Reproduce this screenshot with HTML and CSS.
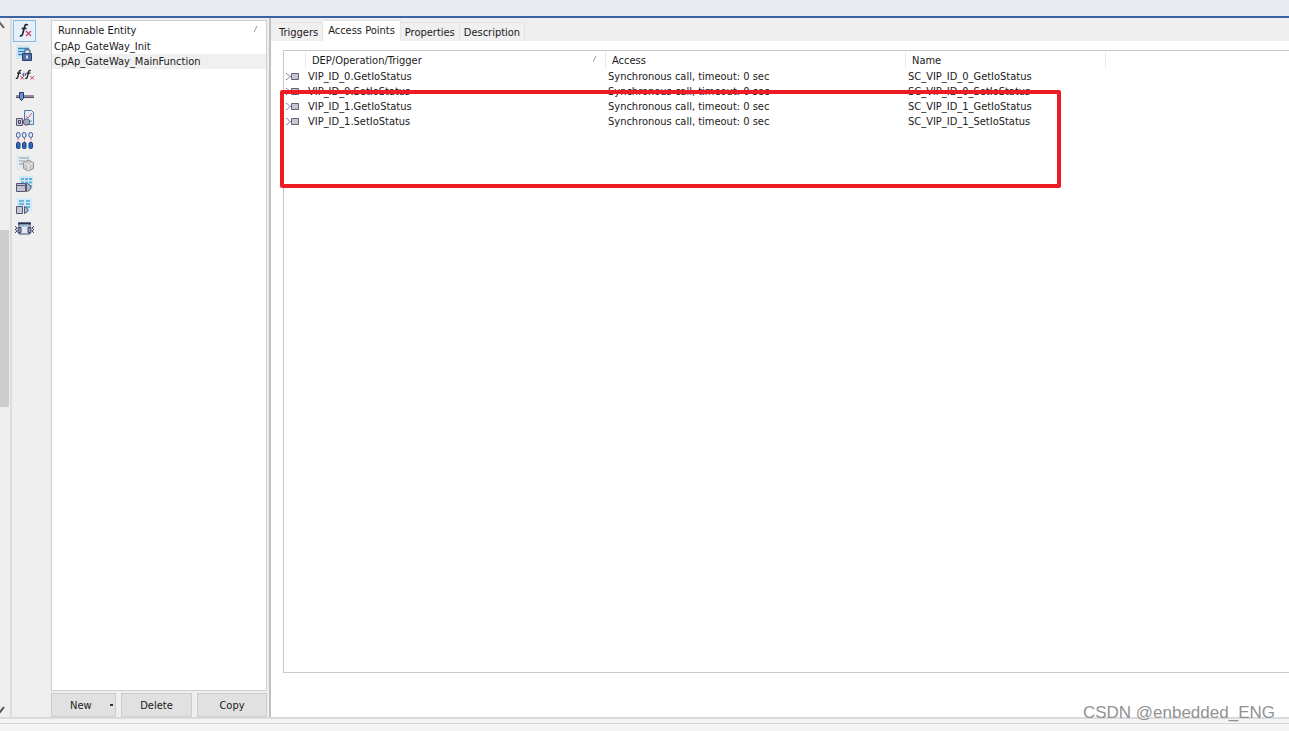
FILE: index.html
```html
<!DOCTYPE html>
<html lang="en">
<head>
<meta charset="utf-8">
<title>Runnable Entities</title>
<link rel="stylesheet" href="styles.css">
</head>
<body>
<div class="app">
  <header class="topbar"></header>
  <main class="workspace">
    <div class="scrollbar">
      <svg class="arrow" viewBox="0 0 9 10"><path d="M-3 6 L0 3 L4 8" fill="none" stroke="#606060" stroke-width="2"/></svg>
      <div class="track"><div class="thumb"></div></div>
      <svg class="arrow" viewBox="0 0 9 10"><path d="M-3 4 L0 7 L4 2" fill="none" stroke="#505050" stroke-width="2"/></svg>
    </div>
    <nav class="toolbar" aria-label="Views">
      <button class="tool active" aria-label="Runnable entities"><svg viewBox="0 0 22 22"><path d="M14.800 5.200Q12.600 3.200 11.600 6.500L9.800 13.500Q9 16.800 6.800 15.600M8.600 8.500h5" fill="none" stroke="#222" stroke-width="1.600"/><path d="M13 11l5 5M18 11l-5 5" stroke="#d04468" stroke-width="1.300"/></svg></button>
      <button class="tool" aria-label="Locked data"><svg viewBox="0 0 22 22"><path d="M3 3h14v14H3z" fill="#d3e7f5"/><path d="M5 6.500h11M5 9.500h6M5 12.500h4" stroke="#328ac4" stroke-width="1.500"/><path d="M11.500 12V10q0-2.500 2.800-2.500T17 10v2" fill="none" stroke="#66728c" stroke-width="1.500"/><path d="M9.500 11.500h9v7h-9z" fill="#4f6fa5" stroke="#2b3f6c"/><path d="M14 13.500v3" stroke="#fff" stroke-width="1.600"/></svg></button>
      <button class="tool" aria-label="Function mapping"><svg viewBox="0 0 22 22"><path d="M8.300 6.800Q6.500 5.800 6 8L5 12.500Q4.400 15 2.800 14.200M4 9.200h4M17.800 6.800Q16 5.800 15.500 8l-1 4.500Q13.900 15 12.300 14.200M13.500 9.200h4" fill="none" stroke="#222" stroke-width="1.300"/><path d="M7.500 12l3.500 3.500M11 12l-3.500 3.500M17.500 12l3.500 3.500M21 12l-3.500 3.500" stroke="#d03d62"/><path d="M9 10.500l1.800-2v4zM13.500 10.500l-1.800-2v4z" fill="#4a4a88"/></svg></button>
      <button class="tool" aria-label="Parameter"><svg viewBox="0 0 22 22"><path d="M3 9h18v3H3z" fill="#8b8d99"/><path d="M3 11.500h18" stroke="#50515c"/><path d="M6.500 6.500h4v6l-2 2-2-2z" fill="#6c92c9" stroke="#25366f"/></svg></button>
      <button class="tool" aria-label="Port report"><svg viewBox="0 0 22 22"><path d="M11.500 2.500h7l2 2v12h-9z" fill="#e2edfa" stroke="#5a76a8"/><path d="M13 8l2 2 4-5" fill="none" stroke="#d66078"/><path d="M15 13h4" stroke="#3f92cb"/><path d="M3.500 10.500h6v7h-6z" fill="#c9cad3" stroke="#565872"/><path d="M5.500 12.500h2v3h-2zM9 14h2" fill="none" stroke="#464968"/><circle cx="13.500" cy="14" r="3.200" fill="#a7a8bb" stroke="#56597a"/></svg></button>
      <button class="tool" aria-label="Connections"><svg viewBox="0 0 22 22"><path d="M5 8v5M11.500 8v5M18 8v5" stroke="#d45d77" stroke-dasharray="2 1"/><g stroke="#3558a0"><rect x="3.500" y="2.500" width="3.500" height="5" rx="1.700" fill="#e4effa"/><rect x="9.500" y="2.500" width="3.500" height="5" rx="1.700" fill="#e4effa"/><rect x="16" y="2.500" width="3.500" height="5" rx="1.700" fill="#e4effa"/></g><g fill="#2a6cb8" stroke="#1c3f88"><rect x="3.500" y="12.500" width="3.500" height="6" rx="1.200"/><rect x="9.500" y="12.500" width="3.500" height="6" rx="1.200"/><rect x="16" y="12.500" width="3.500" height="6" rx="1.200"/></g></svg></button>
      <button class="tool" aria-label="Component data"><svg viewBox="0 0 22 22"><path d="M3 3h15v15H3z" fill="#e0ebf2"/><path d="M6 6h10M6 9h6M6 12h4" stroke="#b0b4b7" stroke-width="1.500"/><path d="M10.500 10.500l5-2.500 5 2.500v6l-5 2.500-5-2.500z" fill="#cbcbcb" stroke="#939393"/><path d="M11 11l4.500 2 4.500-2M15.500 13v5.500" fill="none" stroke="#f0f0f0"/></svg></button>
      <button class="tool" aria-label="Table ports"><svg viewBox="0 0 22 22"><path d="M6 2h14v14H6z" fill="#cfe8f6"/><path d="M8 5h11M8 8.500h11M8 12h11" stroke="#5fb2dc" stroke-width="2" stroke-dasharray="3 1"/><path d="M3.500 9.500h9v8h-9z" fill="#c2c3cc" stroke="#55577a"/><path d="M4 11.500h8" stroke="#55577a"/><path d="M13.500 9.500h1q3.500 2 3.500 4t-3.500 4h-1z" fill="#b5b7c6" stroke="#55577a"/></svg></button>
      <button class="tool" aria-label="Document ports"><svg viewBox="0 0 22 22"><path d="M4 2h15v14H4z" fill="#d3ebf9"/><path d="M6 5h5M13 5h4M6 8h5M13 8h4M13 11h4" stroke="#4ba4d3" stroke-width="1.500"/><path d="M3.500 10.500h6v7h-6z" fill="#c6c7cf" stroke="#55577a"/><path d="M11.500 10.500q3.500 1.500 3.500 3.500t-3.500 3.500z" fill="#b9bbc9" stroke="#55577a"/></svg></button>
      <button class="tool" aria-label="Component ports"><svg viewBox="0 0 22 22"><path d="M6 5h11v11H6z" fill="#dfeaf3" stroke="#42476c"/><path d="M5 5.500h13" stroke="#293354" stroke-width="2"/><path d="M7 8h9" stroke="#6199bd"/><path d="M2 8l2 2-2 1.500 2 1.500-2 2M21 8l-2 2 2 1.500-2 1.500 2 2" fill="none" stroke="#42476c"/><path d="M5 9.500h3v5H5zM15 9.500h3v5h-3z" fill="#8b91a8" stroke="#42476c"/></svg></button>
    </nav>
    <section class="entities">
      <div class="entity-list" role="listbox" aria-label="Runnable Entity">
        <div class="entity-head"><span>Runnable Entity</span><svg class="sort" viewBox="0 0 4 6"><path d="M0 6L3 0" stroke="#999"/></svg></div>
        <div class="entity" role="option">CpAp_GateWay_Init</div>
        <div class="entity selected" role="option" aria-selected="true">CpAp_GateWay_MainFunction</div>
      </div>
      <div class="actions">
        <button class="action new">New<span class="more"></span></button>
        <button class="action">Delete</button>
        <button class="action">Copy</button>
      </div>
    </section>
    <section class="details">
      <div class="tabs" role="tablist">
        <button class="tab" role="tab">Triggers</button>
        <button class="tab current" role="tab" aria-selected="true">Access Points</button>
        <button class="tab" role="tab">Properties</button>
        <button class="tab" role="tab">Description</button>
      </div>
      <div class="points">
        <table class="grid">
          <colgroup><col class="c-icon"><col class="c-wide"><col class="c-wide"><col class="c-name"><col></colgroup>
          <thead><tr><th></th><th><span class="sorted">DEP/Operation/Trigger<svg class="sort" viewBox="0 0 4 6"><path d="M0 6L3 0" stroke="#999"/></svg></span></th><th>Access</th><th>Name</th><th></th></tr></thead>
          <tbody>
            <tr><td><svg class="port" viewBox="0 0 14 9"><path d="M0 1.500h1L4 4.500 1 7.500H0M4 4.500h2" fill="none" stroke="#77779c"/><path d="M5.500 1.500h7v6h-7z" fill="#c6c6ce" stroke="#606078"/></svg></td><td>VIP_ID_0.GetIoStatus</td><td>Synchronous call, timeout: 0 sec</td><td>SC_VIP_ID_0_GetIoStatus</td><td></td></tr>
            <tr><td><svg class="port" viewBox="0 0 14 9"><path d="M0 1.500h1L4 4.500 1 7.500H0M4 4.500h2" fill="none" stroke="#77779c"/><path d="M5.500 1.500h7v6h-7z" fill="#c6c6ce" stroke="#606078"/></svg></td><td>VIP_ID_0.SetIoStatus</td><td>Synchronous call, timeout: 0 sec</td><td>SC_VIP_ID_0_SetIoStatus</td><td></td></tr>
            <tr><td><svg class="port" viewBox="0 0 14 9"><path d="M0 1.500h1L4 4.500 1 7.500H0M4 4.500h2" fill="none" stroke="#77779c"/><path d="M5.500 1.500h7v6h-7z" fill="#c6c6ce" stroke="#606078"/></svg></td><td>VIP_ID_1.GetIoStatus</td><td>Synchronous call, timeout: 0 sec</td><td>SC_VIP_ID_1_GetIoStatus</td><td></td></tr>
            <tr><td><svg class="port" viewBox="0 0 14 9"><path d="M0 1.500h1L4 4.500 1 7.500H0M4 4.500h2" fill="none" stroke="#77779c"/><path d="M5.500 1.500h7v6h-7z" fill="#c6c6ce" stroke="#606078"/></svg></td><td>VIP_ID_1.SetIoStatus</td><td>Synchronous call, timeout: 0 sec</td><td>SC_VIP_ID_1_SetIoStatus</td><td></td></tr>
          </tbody>
        </table>
        <div class="highlight"></div>
      </div>
    </section>
  </main>
  <footer class="statusbar"></footer>
  <div class="watermark">CSDN @enbedded_ENG</div>
</div>
</body>
</html>
```
FILE: styles.css
```css
* { box-sizing: border-box; }
body {
  margin: 0;
  font: 11px/15px "DejaVu Sans Condensed", "DejaVu Sans", sans-serif;
  color: #1a1a1a;
  background: #efefef;
}
button { font: inherit; color: inherit; margin: 0; padding: 0; }
svg { display: block; }
.app {
  position: relative;
  display: flex;
  flex-direction: column;
  height: 100vh;
  overflow: hidden;
}
.topbar { height: 18px; background: #e8ebf0; border-bottom: 2px solid #3c62a3; flex: none; }
.workspace { flex: 1; display: flex; min-height: 0; }
.statusbar {
  height: 14px;
  flex: none;
  background: linear-gradient(#d9dcde 0 2px, #f4f4f4 2px 6px, #d6d8d6 6px 7px, #f5f5f5 7px);
}

.scrollbar { width: 9px; display: flex; flex-direction: column; flex: none; }
.arrow { width: 9px; height: 10px; margin: 2px 0; }
.track { flex: 1; padding-top: 198px; }
.thumb { height: 177px; background: #cdcdcd; }

.toolbar {
  width: 41px;
  flex: none;
  padding: 2px 0 0 1px;
  margin-left: 1px;
  border-left: 2px solid #dcdcdc;
}
.tool { display: block; width: 23px; height: 22px; border: 0; background: none; }
.tool svg { width: 22px; height: 22px; }
.tool.active { background: #e5f0fa; box-shadow: inset 0 0 0 1px #84b9e6; }

.entities { width: 216px; flex: none; display: flex; flex-direction: column; padding-top: 2px; }
.entity-list { flex: 1; background: #fff; border: 1px solid #cdcfd3; }
.entity-head { display: flex; justify-content: space-between; padding: 2px 8px 1px 6px; }
.sort { width: 4px; height: 6px; margin-top: 3px; }
.entity { padding-left: 2px; }
.entity.selected { background: #f0f0f0; }
.actions { display: grid; grid-template-columns: 65px 71px 70px; gap: 5px; padding: 2px 0 0; }
.action { height: 24px; background: #e1e1e1; border: 1px solid #cdcdcd; }
.new { display: flex; align-items: center; justify-content: space-between; padding: 0 2px 0 18px; }
.more { width: 3px; height: 2px; background: #333; }

.details {
  flex: 1;
  min-width: 0;
  margin-left: 2px;
  border-left: 2px solid #bfc0c2;
  background: #fff;
  display: flex;
  flex-direction: column;
}
.tabs { display: flex; align-items: flex-end; height: 23px; padding: 2px 0 0 4px; background: #efefef; flex: none; }
.tab { height: 19px; padding: 0 4px; background: #f0f0f0; border: 1px solid #e4e4e4; border-width: 1px 1px 0 0; white-space: nowrap; }
.tab.current { height: 21px; padding: 0 5px 2px; background: #fff; }

.points {
  position: relative;
  flex: 1;
  margin: 9px 0 44px 12px;
  border: 1px solid #c9c9c9;
  border-right: 0;
}
.grid { width: 100%; table-layout: fixed; border-collapse: separate; border-spacing: 0; }
.c-icon { width: 22px; }
.c-wide { width: 300px; }
.c-name { width: 200px; }
.grid th { height: 18px; padding: 2px 8px 1px 6px; font-weight: normal; text-align: left; line-height: 15px; border-right: 1px solid #ececec; }
.grid th:last-child { border-right: 0; }
.grid td { height: 15px; padding: 0 2px; white-space: nowrap; }
.sorted { display: flex; justify-content: space-between; }
.port { width: 14px; height: 9px; }
.highlight {
  position: absolute;
  left: -4px;
  top: 39px;
  width: 781px;
  height: 98px;
  border: 4px solid #ed1c24;
  border-radius: 2px;
}
.watermark {
  position: absolute;
  right: 14px;
  bottom: 8px;
  font: 17px/20px "Liberation Sans", Arial, sans-serif;
  color: #929292;
}
```
